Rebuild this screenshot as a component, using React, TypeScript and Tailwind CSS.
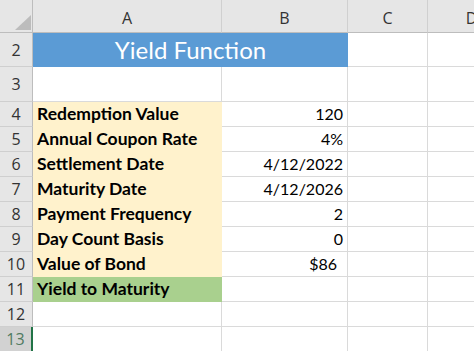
const cols = ['A', 'B', 'C', 'D'];

type Row = {
  n: number;
  label?: string;
  value?: string;
  fill?: 'yellow' | 'green';
  valuePad?: boolean;
};

const rows: Row[] = [
  { n: 4, label: 'Redemption Value', value: '120', fill: 'yellow' },
  { n: 5, label: 'Annual Coupon Rate', value: '4%', fill: 'yellow' },
  { n: 6, label: 'Settlement Date', value: '4/12/2022', fill: 'yellow' },
  { n: 7, label: 'Maturity Date', value: '4/12/2026', fill: 'yellow' },
  { n: 8, label: 'Payment Frequency', value: '2', fill: 'yellow' },
  { n: 9, label: 'Day Count Basis', value: '0', fill: 'yellow' },
  { n: 10, label: 'Value of Bond', value: '$86', fill: 'yellow', valuePad: true },
  { n: 11, label: 'Yield to Maturity', fill: 'green' },
  { n: 12 },
  { n: 13 },
];

function RowHead({ n, active }: { n: number; active?: boolean }) {
  return (
    <div
      className={
        active
          ? 'flex items-center justify-center bg-[#d2d2d2] border-r-2 border-r-[#217346] border-b border-b-[#c8c8c8] text-[#4f7a5f] text-[16px]'
          : 'flex items-center justify-center bg-[#e6e6e6] border-r border-r-[#bdbdbd] border-b border-b-[#cfcfcf] text-[#333] text-[16px]'
      }
      style={{ fontFamily: '"Open Sans", "Noto Sans", sans-serif' }}
    >
      {n}
    </div>
  );
}

export default function App() {
  return (
    <div className="w-[474px] h-[351px] overflow-hidden bg-white">
      <div
        className="grid w-[516px] grid-cols-[33px_189px_126px_80px_88px] grid-rows-[33px_34px_35px_repeat(10,25px)] text-black"
        style={{ fontFamily: 'Lato, "Open Sans", sans-serif' }}
      >
        {/* Corner */}
        <div className="relative bg-[#e6e6e6] border-r border-r-[#bdbdbd] border-b border-b-[#bdbdbd]">
          <svg className="absolute left-[15px] top-[15px]" width="16" height="15" viewBox="0 0 16 15">
            <polygon points="16,0 16,15 0,15" fill="#bcbcbc" />
          </svg>
        </div>
        {cols.map((c) => (
          <div
            key={c}
            className="flex items-end justify-center pb-[2px] bg-[#e6e6e6] border-r border-r-[#d0d0d0] border-b border-b-[#bdbdbd] text-[#333] text-[16px]"
            style={{ fontFamily: '"Open Sans", "Noto Sans", sans-serif' }}
          >
            {c}
          </div>
        ))}

        {/* Row 2: title */}
        <RowHead n={2} />
        <div className="col-span-2 flex items-center justify-center bg-[#5b9bd5] border-b border-b-[#5b9bd5] text-white text-[24px]">
          Yield Function
        </div>
        <div className="border-r border-b border-[#dadada]" />
        <div className="border-r border-b border-[#dadada]" />

        {/* Row 3 */}
        <RowHead n={3} />
        <div className="border-r border-b border-[#dadada]" />
        <div className="border-r border-b border-[#dadada]" />
        <div className="border-r border-b border-[#dadada]" />
        <div className="border-r border-b border-[#dadada]" />

        {rows.map((r) => (
          <div key={r.n} className="contents">
            <RowHead n={r.n} active={r.n === 13} />
            <div
              className={
                r.fill === 'yellow'
                  ? 'flex items-center pl-[4px] bg-[#fff2cc] font-bold text-[17.5px] whitespace-nowrap'
                  : r.fill === 'green'
                  ? 'flex items-center pl-[4px] bg-[#a9d08e] font-bold text-[17.5px] whitespace-nowrap'
                  : 'border-r border-b border-[#dadada]'
              }
            >
              {r.label}
            </div>
            <div
              className={
                'flex items-center justify-end border-r border-b border-[#dadada] text-[16px] ' +
                (r.valuePad ? 'pr-[10px]' : 'pr-[4px]')
              }
            >
              {r.value}
            </div>
            <div className="border-r border-b border-[#dadada]" />
            <div className="border-r border-b border-[#dadada]" />
          </div>
        ))}
      </div>
    </div>
  );
}
